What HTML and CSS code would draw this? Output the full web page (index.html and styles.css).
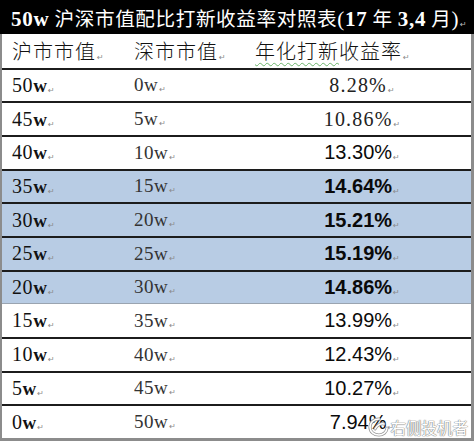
FILE: index.html
```html
<!DOCTYPE html>
<html lang="zh-CN">
<head>
<meta charset="utf-8">
<title>50w 沪深市值配比打新收益率对照表</title>
<link rel="stylesheet" href="styles.css">
</head>
<body>
<div class="page">
  <div class="title"><span class="title-text"><span class="lat">50w</span> 沪深市值配比打新收益率对照表<span class="paren">(</span><span class="lat">17</span> 年 <span class="lat">3,4</span> 月<span class="paren">)</span><span class="pm">↵</span></span></div>
  <div class="frame">
    <div class="table">
      <div class="row head">
        <div class="c1 cjk">沪市市值<span class="pm">↵</span></div>
        <div class="c2 cjk">深市市值<span class="pm">↵</span></div>
        <div class="c3 cjk left"><span class="squig">年化打新</span>收益率<span class="pm">↵</span></div>
      </div>
      <div class="row">
        <div class="c1"><span class="num">50</span><b>w</b><span class="pm">↵</span></div>
        <div class="c2">0w<span class="pm">↵</span></div>
        <div class="c3"><span class="song">8.28%</span><span class="pm">↵</span></div>
      </div>
      <div class="row">
        <div class="c1"><span class="num">45</span><b>w</b><span class="pm">↵</span></div>
        <div class="c2">5w<span class="pm">↵</span></div>
        <div class="c3"><span class="song">10.86%</span><span class="pm">↵</span></div>
      </div>
      <div class="row">
        <div class="c1"><span class="num">40</span><b>w</b><span class="pm">↵</span></div>
        <div class="c2">10w<span class="pm">↵</span></div>
        <div class="c3"><span class="pct">13.30%</span><span class="pm">↵</span></div>
      </div>
      <div class="row hl">
        <div class="c1"><span class="num">35</span><b>w</b><span class="pm">↵</span></div>
        <div class="c2">15w<span class="pm">↵</span></div>
        <div class="c3"><span class="pct bold">14.64%</span><span class="pm">↵</span></div>
      </div>
      <div class="row hl">
        <div class="c1"><span class="num">30</span><b>w</b><span class="pm">↵</span></div>
        <div class="c2">20w<span class="pm">↵</span></div>
        <div class="c3"><span class="pct bold">15.21%</span><span class="pm">↵</span></div>
      </div>
      <div class="row hl">
        <div class="c1"><span class="num">25</span><b>w</b><span class="pm">↵</span></div>
        <div class="c2">25w<span class="pm">↵</span></div>
        <div class="c3"><span class="pct bold">15.19%</span><span class="pm">↵</span></div>
      </div>
      <div class="row hl">
        <div class="c1"><span class="num">20</span><b>w</b><span class="pm">↵</span></div>
        <div class="c2">30w<span class="pm">↵</span></div>
        <div class="c3"><span class="pct bold">14.86%</span><span class="pm">↵</span></div>
      </div>
      <div class="row after-hl">
        <div class="c1"><span class="num">15</span><b>w</b><span class="pm">↵</span></div>
        <div class="c2">35w<span class="pm">↵</span></div>
        <div class="c3"><span class="pct">13.99%</span><span class="pm">↵</span></div>
      </div>
      <div class="row">
        <div class="c1"><span class="num">10</span><b>w</b><span class="pm">↵</span></div>
        <div class="c2">40w<span class="pm">↵</span></div>
        <div class="c3"><span class="pct">12.43%</span><span class="pm">↵</span></div>
      </div>
      <div class="row">
        <div class="c1"><span class="num">5</span><b>w</b><span class="pm">↵</span></div>
        <div class="c2">45w<span class="pm">↵</span></div>
        <div class="c3"><span class="pct">10.27%</span><span class="pm">↵</span></div>
      </div>
      <div class="row">
        <div class="c1"><span class="num">0</span><b>w</b><span class="pm">↵</span></div>
        <div class="c2">50w<span class="pm">↵</span></div>
        <div class="c3"><span class="pct">7.94%</span><span class="pm">↵</span></div>
      </div>
    </div>
  </div>
  <div class="watermark">
    <svg class="wm-logo" width="22" height="20" viewBox="0 0 22 20">
      <path d="M11 2 C5 2 2 6 2 10 C2 15 6 18 11 18 C15 18 19 15 19 11" fill="none" stroke="#9a9a9a" stroke-width="3.2" stroke-linecap="round"/>
      <path d="M11 2 C5 2 2 6 2 10 C2 15 6 18 11 18 C15 18 19 15 19 11" fill="none" stroke="#fff" stroke-width="1.6" stroke-linecap="round"/>
      <path d="M7 12 C9 8 13 6 16 7" fill="none" stroke="#9a9a9a" stroke-width="3" stroke-linecap="round"/>
      <path d="M7 12 C9 8 13 6 16 7" fill="none" stroke="#fff" stroke-width="1.4" stroke-linecap="round"/>
    </svg>
    <span class="wm-text">右侧投机者</span>
  </div>
</div>
</body>
</html>
```

FILE: styles.css
```css
* { box-sizing: border-box; }

html, body {
  margin: 0;
  padding: 0;
  background: #8c8c8c;
}

.page {
  position: relative;
  width: 474px;
  height: 441px;
  overflow: hidden;
  background: #8c8c8c;
}

.title {
  height: 34px;
  background: #000;
  color: #fff;
  display: flex;
  align-items: center;
  padding-left: 11px;
  font-family: "Noto Sans CJK SC", sans-serif;
  font-size: 19.6px;
  font-weight: 400;
  white-space: pre;
  letter-spacing: 0.6px;
}

.title .lat {
  font-family: "Liberation Serif", serif;
  font-weight: bold;
  font-size: 21px;
  letter-spacing: 0.8px;
}

.title .paren {
  font-family: "Liberation Serif", serif;
  font-size: 21px;
}

.title .pm {
  color: #bbb;
}

.frame {
  padding: 0 3px 3px 2px;
  height: 407px;
}

.table {
  display: grid;
  grid-template-rows: repeat(12, 1fr);
  height: 404px;
  background: #fff;
}

.row {
  display: grid;
  grid-template-columns: 122px 121px 1fr;
  align-items: center;
  border-top: 2px solid #1c1c1c;
  background: #fff;
  color: #111;
  font-family: "Liberation Serif", serif;
  font-size: 20px;
  white-space: nowrap;
}

.row.head {
  border-top: none;
}

.row.hl {
  background: #b8cce4;
}

.row.after-hl {
  border-top: 1px solid #9aa4b0;
}

.c1 {
  padding-left: 10px;
}

.c1 .num {
  letter-spacing: 0.6px;
}

.c1 b {
  font-size: 19px;
}

.c2 {
  padding-left: 10px;
  color: #333;
  font-size: 19px;
  letter-spacing: 0.5px;
}

.c3 {
  text-align: center;
  padding-left: 8px;
}

.c3.left {
  text-align: left;
  padding-left: 10px;
}

.cjk {
  font-family: "Noto Sans CJK SC", sans-serif;
  font-weight: 300;
  font-size: 20px;
  letter-spacing: 1px;
  color: #111;
}

.squig {
  text-decoration: underline wavy #6bb36b;
  text-decoration-thickness: 1px;
  text-underline-offset: 3px;
}

.song {
  font-family: "Liberation Serif", serif;
  font-size: 20px;
  letter-spacing: 1.2px;
  color: #222;
}

.pct {
  font-family: "Liberation Sans", Arial, sans-serif;
  font-size: 20px;
  color: #0a0a0a;
}

.pct.bold {
  font-weight: bold;
}

.pm {
  font-family: "DejaVu Sans", sans-serif;
  font-size: 8px;
  color: #8a8a8a;
  letter-spacing: 0;
  font-weight: normal;
  margin-left: 1px;
  vertical-align: -1px;
}

.watermark {
  position: absolute;
  right: 6px;
  bottom: 3px;
  display: flex;
  align-items: center;
  gap: 0;
}

.wm-text {
  font-family: "Noto Sans CJK SC", sans-serif;
  font-size: 15.5px;
  color: #fff;
  opacity: 0.9;
  text-shadow: 0 0 1px #777, 0 0 1px #777, 0 0 1px #777;
  letter-spacing: 0;
}
```
